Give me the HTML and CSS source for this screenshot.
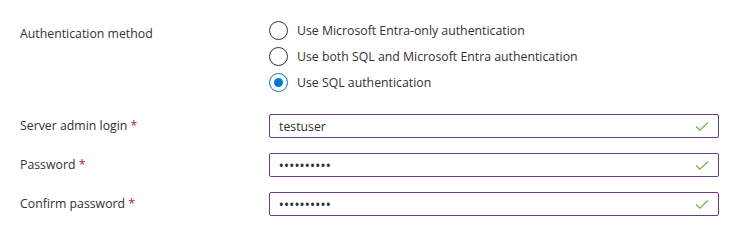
FILE: index.html
```html
<!DOCTYPE html>
<html lang="en">
<head>
<meta charset="utf-8">
<title>Authentication</title>
<link rel="stylesheet" href="styles.css">
</head>
<body>
<div class="form">
  <div class="row row-radio">
    <div class="label label-top">Authentication method</div>
    <div class="radios">
      <div class="radio"><span class="circle"></span><span class="rtext">Use Microsoft Entra-only authentication</span></div>
      <div class="radio"><span class="circle"></span><span class="rtext">Use both SQL and Microsoft Entra authentication</span></div>
      <div class="radio"><span class="circle checked"></span><span class="rtext">Use SQL authentication</span></div>
    </div>
  </div>
  <div class="row">
    <div class="label">Server admin login <span class="req">*</span></div>
    <div class="input"><span class="value">testuser</span><svg class="check" viewBox="0 0 16 16" width="16" height="16"><path d="M2 8.5 L5.8 12.2 L14 4.5" fill="none" stroke="#74b33a" stroke-width="1.1"/></svg></div>
  </div>
  <div class="row">
    <div class="label">Password <span class="req">*</span></div>
    <div class="input"><span class="value dots">••••••••••</span><svg class="check" viewBox="0 0 16 16" width="16" height="16"><path d="M2 8.5 L5.8 12.2 L14 4.5" fill="none" stroke="#74b33a" stroke-width="1.1"/></svg></div>
  </div>
  <div class="row">
    <div class="label">Confirm password <span class="req">*</span></div>
    <div class="input"><span class="value dots">••••••••••</span><svg class="check" viewBox="0 0 16 16" width="16" height="16"><path d="M2 8.5 L5.8 12.2 L14 4.5" fill="none" stroke="#74b33a" stroke-width="1.1"/></svg></div>
  </div>
</div>
</body>
</html>
```
FILE: styles.css
```css
* { box-sizing: border-box; }
html, body { margin: 0; background: #fff; }
body {
  font-family: "Open Sans", "Noto Sans", "DejaVu Sans", sans-serif;
  font-size: 12.3px;
  color: #323130;
}
.form {
  padding: 20px 0 0 20px;
  display: flex;
  flex-direction: column;
  gap: 15px;
}
.row {
  display: grid;
  grid-template-columns: 249px 450px;
  align-items: center;
}
.row-radio {
  align-items: start;
  margin-bottom: 7px;
}
.label { line-height: 18px; }
.label-top { padding-top: 5px; }
.req { color: #a4262c; }
.radios {
  display: flex;
  flex-direction: column;
  gap: 6px;
}
.radio {
  display: flex;
  align-items: center;
  height: 20px;
}
.circle {
  width: 19px;
  height: 19px;
  border: 1px solid #323130;
  border-radius: 50%;
  margin-right: 9px;
  position: relative;
  flex: none;
}
.circle.checked { border-color: #0078d4; }
.circle.checked::after {
  content: "";
  position: absolute;
  left: 4px; top: 4px;
  width: 9px; height: 9px;
  border-radius: 50%;
  background: #0078d4;
}
.input {
  height: 24px;
  border: 1px solid #6b3a8c;
  border-radius: 2px;
  display: flex;
  align-items: center;
  padding: 0 8px 0 9px;
}
.value { flex: 1; }
.dots { letter-spacing: 0.7px; font-size: 12px; font-weight: 600; }
.check { flex: none; }
```
